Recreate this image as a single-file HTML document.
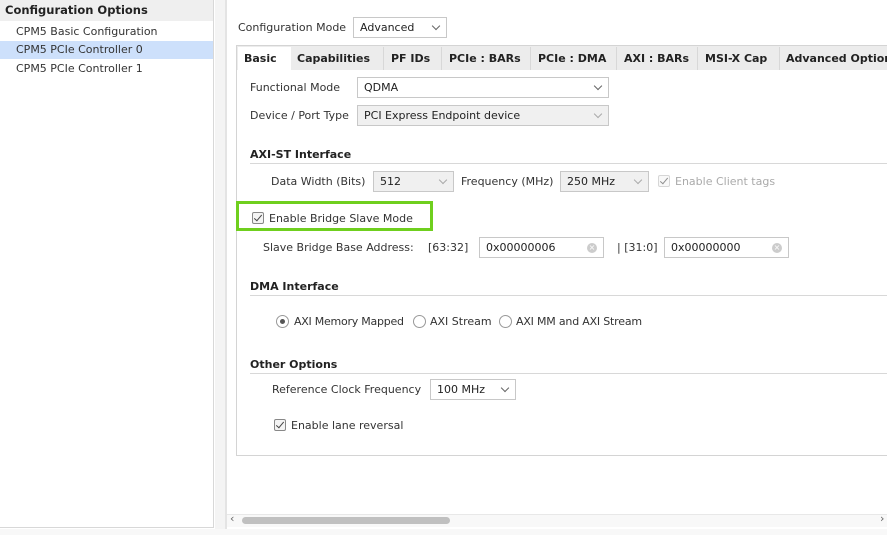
<!DOCTYPE html>
<html><head><style>
*{box-sizing:border-box;margin:0;padding:0}
body{width:887px;height:535px;overflow:hidden;background:#fff;font-family:"DejaVu Sans","Liberation Sans",sans-serif;font-size:11px;color:#333;position:relative}
.a{position:absolute;white-space:nowrap}
.b{font-weight:bold;color:#222}
.sel{position:absolute;border:1px solid #c8c8c8;background:#fff;height:21px;padding:3px 6px;color:#222;white-space:nowrap}
.sel.g{background:#f0f0f0}
.chev{position:absolute;right:7px;top:5px;width:6px;height:6px;border-right:1.3px solid #666;border-bottom:1.3px solid #666;transform:rotate(45deg)}
.sel.g .chev{border-color:#aaa}
.hr{position:absolute;height:1px;background:#d8d8d8}
.cb{position:absolute;width:12px;height:12px;border:1px solid #888;border-radius:2px;background:#f4f4f4}
.cb:after{content:"";position:absolute;left:3px;top:0px;width:3px;height:7px;border-right:1.6px solid #444;border-bottom:1.6px solid #444;transform:rotate(40deg)}
.rd{position:absolute;width:13px;height:13px;border:1px solid #999;border-radius:50%;background:#fff}
.x{position:absolute;right:6px;top:5px;width:10px;height:10px;border-radius:50%;background:#ccc;color:#fff;font-size:8px;line-height:10px;text-align:center}
.tab{position:absolute;top:47px;height:23px;padding-top:5px;font-weight:bold;color:#222;border-left:1px solid #d8d8d8;white-space:nowrap}
</style></head><body>
<div class="a" style="left:0;top:0;width:214px;height:528px;border-right:1px solid #d8d8d8;border-bottom:1px solid #d8d8d8"></div>
<div class="a" style="left:0;top:0;width:213px;height:21px;background:#efefef"></div>
<div class="a b" style="left:5px;top:3px;font-size:11.5px">Configuration Options</div>
<div class="a" style="left:16px;top:25px">CPM5 Basic Configuration</div>
<div class="a" style="left:0;top:41px;width:213px;height:18px;background:#cde0fb"></div>
<div class="a" style="left:16px;top:43px">CPM5 PCIe Controller 0</div>
<div class="a" style="left:16px;top:62px">CPM5 PCIe Controller 1</div>
<div class="a" style="left:215px;top:0;width:10px;height:535px;background:#f4f4f4"></div>
<div class="a" style="left:225px;top:0;width:2px;height:530px;background:#e4e4e4"></div>
<div class="a" style="left:0;top:529px;width:887px;height:6px;background:#f8f8f8"></div>

<div class="a" style="left:238px;top:21px">Configuration Mode</div>
<div class="sel" style="left:353px;top:17px;width:94px">Advanced<span class="chev"></span></div>

<div class="a" style="left:236px;top:45px;width:660px;height:411px;border:1px solid #d4d4d4;border-right:none"></div>
<div class="a" style="left:237px;top:46px;width:650px;height:24px;background:#ececec"></div>
<div class="a" style="left:238px;top:47px;width:53px;height:24px;background:#fff"></div>
<div class="a b" style="left:244px;top:52px">Basic</div>
<div class="a b" style="left:297px;top:52px">Capabilities</div>
<div class="tab" style="left:383px;padding-left:7px">PF IDs</div>
<div class="tab" style="left:441px;padding-left:7px">PCIe : BARs</div>
<div class="tab" style="left:530px;padding-left:7px">PCIe : DMA</div>
<div class="tab" style="left:616px;padding-left:7px">AXI : BARs</div>
<div class="tab" style="left:697px;padding-left:7px">MSI-X Cap</div>
<div class="tab" style="left:779px;padding-left:6px">Advanced Options</div>

<div class="a" style="left:250px;top:81px">Functional Mode</div>
<div class="sel" style="left:357px;top:77px;width:252px">QDMA<span class="chev"></span></div>
<div class="a" style="left:250px;top:109px">Device / Port Type</div>
<div class="sel g" style="left:357px;top:105px;width:252px">PCI Express Endpoint device<span class="chev"></span></div>

<div class="a b" style="left:250px;top:148px">AXI-ST Interface</div>
<div class="hr" style="left:250px;top:163px;width:637px"></div>
<div class="a" style="left:271px;top:175px">Data Width (Bits)</div>
<div class="sel g" style="left:373px;top:171px;width:81px">512<span class="chev"></span></div>
<div class="a" style="left:461px;top:175px">Frequency (MHz)</div>
<div class="sel g" style="left:560px;top:171px;width:89px">250 MHz<span class="chev" style="border-color:#aaa"></span></div>
<div class="cb" style="left:658px;top:175px;border-color:#bbb;opacity:.6"></div>
<div class="a" style="left:675px;top:175px;color:#aaa">Enable Client tags</div>

<div class="a" style="left:236px;top:201px;width:197px;height:30px;border:3px solid #6fcf1e"></div>
<div class="cb" style="left:252px;top:212px"></div>
<div class="a" style="left:269px;top:212px">Enable Bridge Slave Mode</div>
<div class="a" style="left:263px;top:241px">Slave Bridge Base Address:</div>
<div class="a" style="left:428px;top:241px">[63:32]</div>
<div class="sel" style="left:479px;top:237px;width:125px">0x00000006<span class="x">×</span></div>
<div class="a" style="left:617px;top:241px">| [31:0]</div>
<div class="sel" style="left:664px;top:237px;width:125px">0x00000000<span class="x">×</span></div>

<div class="a b" style="left:250px;top:280px">DMA Interface</div>
<div class="hr" style="left:250px;top:295px;width:637px"></div>
<div class="rd" style="left:276px;top:315px"><div style="position:absolute;left:3px;top:3px;width:5px;height:5px;border-radius:50%;background:#555"></div></div>
<div class="a" style="left:294px;top:315px;letter-spacing:-0.25px">AXI Memory Mapped</div>
<div class="rd" style="left:413px;top:315px"></div>
<div class="a" style="left:430px;top:315px">AXI Stream</div>
<div class="rd" style="left:499px;top:315px"></div>
<div class="a" style="left:516px;top:315px;letter-spacing:-0.2px">AXI MM and AXI Stream</div>

<div class="a b" style="left:250px;top:358px">Other Options</div>
<div class="hr" style="left:250px;top:373px;width:637px"></div>
<div class="a" style="left:272px;top:383px">Reference Clock Frequency</div>
<div class="sel" style="left:430px;top:379px;width:86px">100 MHz<span class="chev"></span></div>
<div class="cb" style="left:274px;top:419px"></div>
<div class="a" style="left:291px;top:419px">Enable lane reversal</div>

<div class="a" style="left:227px;top:514px;width:660px;height:13px;background:#f8f8f8;border-top:1px solid #e8e8e8"></div>
<div class="a" style="left:242px;top:517px;width:208px;height:7px;border-radius:4px;background:#c0c0c0"></div>
<div class="a" style="left:230px;top:512px;font-size:11px;color:#666">‹</div>
<div class="a" style="left:880px;top:512px;font-size:11px;color:#666">›</div>
</body></html>
